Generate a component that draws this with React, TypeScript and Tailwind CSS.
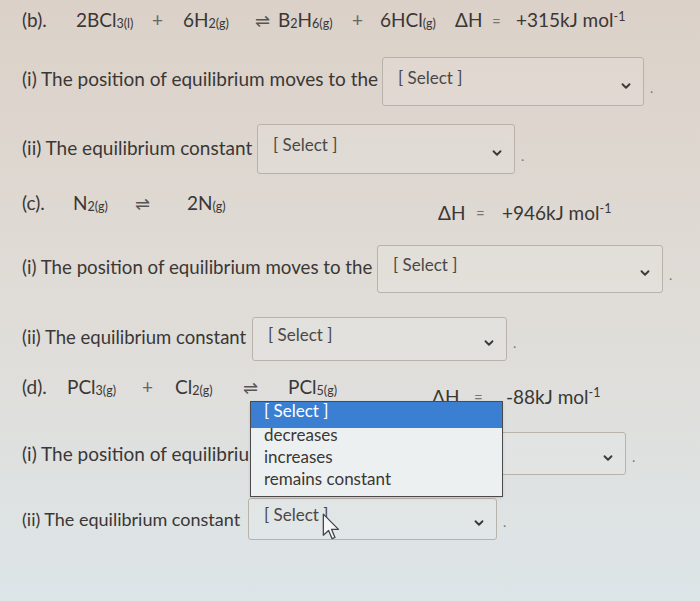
import { ChevronDown } from "lucide-react";
import type { ReactNode } from "react";

// one cell of an equation line, fixed width so the terms sit where the page has them
function Cell({ w, children }: { w: string; children?: ReactNode }) {
  return <span className={`${w} shrink-0 whitespace-nowrap`}>{children}</span>;
}

function Sub({ children }: { children: ReactNode }) {
  return <sub className="text-[12.5px] relative top-[1px]">{children}</sub>;
}

function Arrow() {
  return <span className="text-[18px] font-['DejaVu_Sans',sans-serif] text-[#555]">⇌</span>;
}

function SelectBox({ w, h, children }: { w: string; h: string; children?: ReactNode }) {
  return (
    <div className="flex items-end gap-[6px]">
      <div
        className={`${w} ${h} relative flex items-center justify-between pl-[15px] pr-[10px] border border-[#b9b2ab] rounded-[3px] bg-white/10`}
      >
        <span className="text-[17px] text-[#4a4846] -mt-[8px]">[ Select ]</span>
        <ChevronDown size={14} strokeWidth={3.2} className="text-[#3c3a38] mt-[8px]" />
        {children}
      </div>
      <span className="text-[14px] text-[#777] mb-[6px]">.</span>
    </div>
  );
}

export default function App() {
  return (
    <div className="w-[700px] h-[601px] overflow-hidden bg-gradient-to-b from-[#dbd1c8] via-[#e0dcd7] to-[#dde5e8] pl-[22px] pt-[8px] font-['Lato',sans-serif] text-[19px] text-[#3a3735] leading-[24px]">
      {/* (b) */}
      <div className="flex h-[24px] items-center">
        <Cell w="w-[54px]">(b).</Cell>
        <Cell w="w-[76px]">2BCl<Sub>3(l)</Sub></Cell>
        <Cell w="w-[31px]"><span className="text-[#666]">+</span></Cell>
        <Cell w="w-[72px]">6H<Sub>2(g)</Sub></Cell>
        <Cell w="w-[23px]"><Arrow /></Cell>
        <Cell w="w-[74px]">B<Sub>2</Sub>H<Sub>6(g)</Sub></Cell>
        <Cell w="w-[28px]"><span className="text-[#666]">+</span></Cell>
        <Cell w="w-[75px]">6HCl<Sub>(g)</Sub></Cell>
        <Cell w="w-[37px]">ΔH</Cell>
        <Cell w="w-[24px]"><span className="text-[#777] text-[15px]">=</span></Cell>
        <Cell w="w-[130px]">+315kJ mol<sup className="text-[12.5px]">-1</sup></Cell>
      </div>

      <div className="mt-[25px] flex items-center">
        <span className="w-[360px] shrink-0 whitespace-nowrap -mt-[6px]">(i) The position of equilibrium moves to the</span>
        <SelectBox w="w-[262px]" h="h-[49px]" />
      </div>

      <div className="mt-[18px] flex items-center">
        <span className="w-[235px] shrink-0 whitespace-nowrap -mt-[2px]">(ii) The equilibrium constant</span>
        <SelectBox w="w-[258px]" h="h-[50px]" />
      </div>

      {/* (c) */}
      <div className="mt-[17px] flex h-[34px]">
        <Cell w="w-[51px]">(c).</Cell>
        <Cell w="w-[62px]">N<Sub>2(g)</Sub></Cell>
        <Cell w="w-[52px]"><Arrow /></Cell>
        <Cell w="w-[251px]">2N<Sub>(g)</Sub></Cell>
        <div className="flex items-center self-end">
          <Cell w="w-[38px]">ΔH</Cell>
          <Cell w="w-[26px]"><span className="text-[#777] text-[15px]">=</span></Cell>
          <Cell w="w-[130px]">+946kJ mol<sup className="text-[12.5px]">-1</sup></Cell>
        </div>
      </div>

      <div className="mt-[20px] flex items-center">
        <span className="w-[355px] shrink-0 whitespace-nowrap -mt-[4px] text-[18.7px]">(i) The position of equilibrium moves to the</span>
        <SelectBox w="w-[286px]" h="h-[48px]" />
      </div>

      <div className="mt-[24px] flex items-center">
        <span className="w-[230px] shrink-0 whitespace-nowrap -mt-[4px] text-[18.5px]">(ii) The equilibrium constant</span>
        <SelectBox w="w-[255px]" h="h-[44px]" />
      </div>

      {/* (d) */}
      <div className="mt-[14px] flex h-[34px]">
        <Cell w="w-[45px]">(d).</Cell>
        <Cell w="w-[75px]">PCl<Sub>3(g)</Sub></Cell>
        <Cell w="w-[33px]"><span className="text-[#666]">+</span></Cell>
        <Cell w="w-[68px]">Cl<Sub>2(g)</Sub></Cell>
        <Cell w="w-[45px]"><Arrow /></Cell>
        <Cell w="w-[144px]">PCl<Sub>5(g)</Sub></Cell>
        <div className="flex items-center self-end">
          <Cell w="w-[42px]">ΔH</Cell>
          <Cell w="w-[32px]"><span className="text-[#777] text-[15px]">=</span></Cell>
          <Cell w="w-[110px]">-88kJ mol<sup className="text-[12.5px]">-1</sup></Cell>
        </div>
      </div>

      <div className="mt-[23px] flex items-center">
        <span className="w-[356px] shrink-0 whitespace-nowrap">(i) The position of equilibrium moves to the</span>
        <SelectBox w="w-[248px]" h="h-[43px]" />
      </div>

      <div className="mt-[23px] flex items-center">
        <span className="w-[226px] shrink-0 whitespace-nowrap text-[18px]">(ii) The equilibrium constant</span>
        <SelectBox w="w-[249px]" h="h-[42px]">
          {/* open option list */}
          <ul className="absolute left-[1px] bottom-[calc(100%+2px)] w-[253px] border border-[#4a4a4a] bg-[#edf0f1] text-[17px] leading-[22px] text-[#3a3735] shadow-sm pb-[6px]">
            <li className="bg-[#3b7fd2] text-white px-[13px] h-[26px] leading-[18px]">[ Select ]</li>
            <li className="px-[13px] -mt-[4px]">decreases</li>
            <li className="px-[13px]">increases</li>
            <li className="px-[13px]">remains constant</li>
          </ul>
          {/* mouse pointer */}
          <svg
            className="absolute left-[73px] top-[14px]"
            width="19"
            height="28"
            viewBox="0 0 16 24"
          >
            <path
              d="M1 1 L1 19 L5.5 15 L8.5 22 L11 21 L8 14 L14 14 Z"
              fill="#f4f6f7"
              stroke="#444"
              strokeWidth="1.1"
              strokeLinejoin="round"
            />
          </svg>
        </SelectBox>
      </div>
    </div>
  );
}
